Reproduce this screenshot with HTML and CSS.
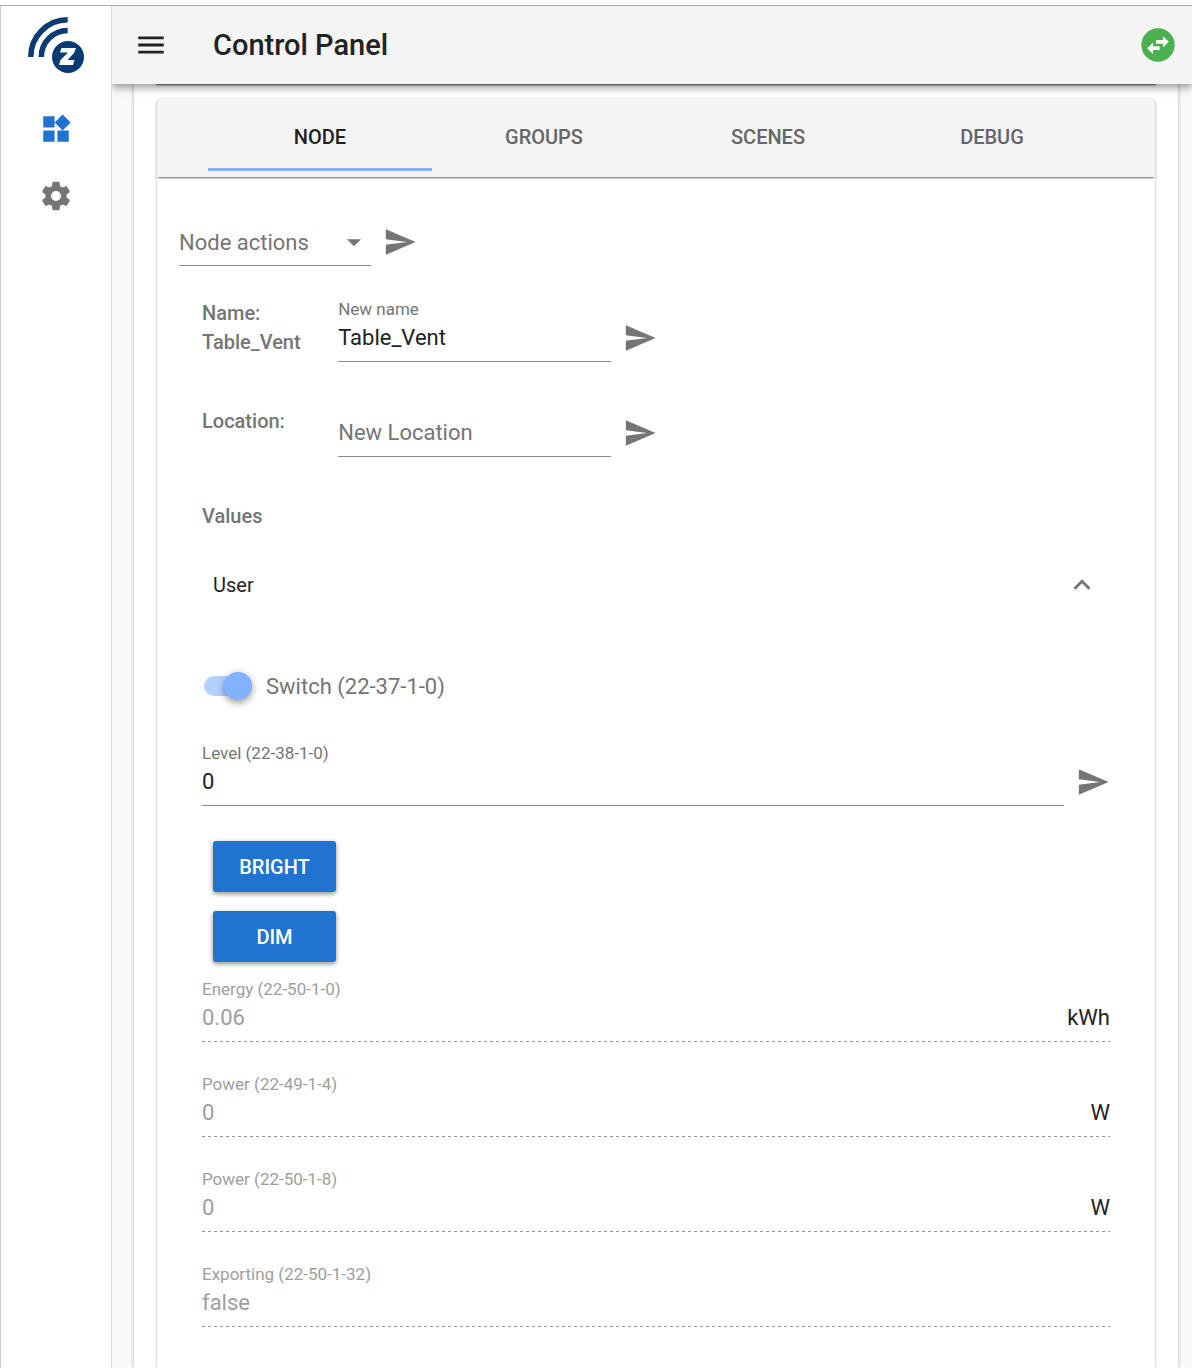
FILE: index.html
```html
<!DOCTYPE html>
<html lang="en">
<head>
  <meta charset="UTF-8">
  <meta name="viewport" content="width=device-width, initial-scale=1.0">
  <title>Control Panel</title>
  <link rel="stylesheet" href="styles.css">
</head>
<body>
  <!-- shared icons -->
  <svg class="sprite" aria-hidden="true">
    <symbol id="send" viewBox="0 0 24 24"><path d="M2.01 21L23 12 2.01 3 2 10l15 2-15 2z"/></symbol>
  </svg>

  <div class="app">
    <nav class="sidebar">
      <a href="#" class="logo" aria-label="Home">
        <svg viewBox="0 0 56 56" width="56" height="56">
          <path d="M2.800 40A37 37 0 0 1 39.700 2.800M13.300 40A26.500 26.500 0 0 1 39.700 13.500" fill="none" stroke="#0b3b73" stroke-width="5.500"/>
          <circle cx="40" cy="40" r="16" fill="#0b3b73"/>
          <path d="M33.500 31H48L46 36L39.500 43H46.500L45 48H31L32.500 43L40 35.500H32z" fill="#fff"/>
        </svg>
      </a>
      <a href="#" class="side-link active" aria-label="Control Panel">
        <svg viewBox="0 0 24 24"><path d="M13 13v8h8v-8h-8zM3 21h8v-8H3v8zM3 3v8h8V3H3zm13.660-1.310L11 7.340 16.660 13l5.660-5.660-5.660-5.650z"/></svg>
      </a>
      <a href="#" class="side-link" aria-label="Settings">
        <svg viewBox="0 0 24 24"><path d="M12 15.500A3.500 3.500 0 0 1 8.500 12 3.500 3.500 0 0 1 12 8.500a3.500 3.500 0 0 1 3.500 3.500 3.500 3.500 0 0 1-3.500 3.500m7.430-2.530c.04-.32.07-.64.07-.97s-.03-.66-.07-1l2.110-1.630c.19-.15.24-.42.12-.64l-2-3.460c-.12-.22-.39-.31-.61-.22l-2.490 1c-.52-.39-1.060-.73-1.690-.98l-.37-2.650A.506.506 0 0 0 14 2h-4c-.25 0-.46.18-.5.42l-.37 2.650c-.63.25-1.170.59-1.690.98l-2.490-1c-.22-.09-.49 0-.61.22l-2 3.460c-.13.22-.07.49.12.64L4.570 11c-.04.34-.07.67-.07 1s.03.65.07.97l-2.110 1.660c-.19.15-.25.42-.12.64l2 3.460c.12.22.39.3.61.22l2.490-1.010c.52.4 1.060.74 1.690.99l.37 2.650c.04.24.25.42.5.42h4c.25 0 .46-.18.5-.42l.37-2.650c.63-.26 1.170-.59 1.690-.99l2.490 1.010c.22.08.49 0 .61-.22l2-3.460c.12-.22.07-.49-.12-.64z"/></svg>
      </a>
    </nav>

    <div class="page">
      <header class="toolbar">
        <button type="button" class="icon-btn menu-btn" aria-label="Menu">
          <svg viewBox="0 0 24 24"><path d="M3 18h18v-2H3v2zm0-5h18v-2H3v2zm0-7v2h18V6H3z"/></svg>
        </button>
        <h1>Control Panel</h1>
        <svg class="status" viewBox="0 0 24 24" role="img" aria-label="Connected"><circle cx="12" cy="12" r="10" fill="#4caf50"/><path fill="#fff" d="M10.800 9H15V6.700L18.500 10.100 15 13.500V11.200H10.800zM13 15H9V17.400L5.500 14 9 10.600V12.800H13z"/></svg>
      </header>

      <main class="content">
        <div class="card">
          <div class="table-end"></div>
          <section class="panel">
            <div class="tabs" role="tablist">
              <button type="button" role="tab" class="tab active" aria-selected="true">NODE</button>
              <button type="button" role="tab" class="tab">GROUPS</button>
              <button type="button" role="tab" class="tab">SCENES</button>
              <button type="button" role="tab" class="tab">DEBUG</button>
            </div>

            <div class="actions">
              <div class="select">
                <select aria-label="Node actions">
                  <option>Node actions</option>
                </select>
                <svg viewBox="0 0 24 24"><path d="M7 10l5 5 5-5z"/></svg>
              </div>
              <button type="button" class="icon-btn" aria-label="Run action"><svg><use href="#send"/></svg></button>
            </div>

            <div class="node">
              <div class="row">
                <div class="row-title">Name:<br>Table_Vent</div>
                <div class="field short">
                  <label for="name">New name</label>
                  <input type="text" id="name" value="Table_Vent">
                </div>
                <button type="button" class="icon-btn" aria-label="Send name"><svg><use href="#send"/></svg></button>
              </div>
              <div class="row">
                <div class="row-title single">Location:</div>
                <div class="field short no-label">
                  <input type="text" id="location" placeholder="New Location" aria-label="New Location">
                </div>
                <button type="button" class="icon-btn" aria-label="Send location"><svg><use href="#send"/></svg></button>
              </div>

              <h2>Values</h2>
              <button type="button" class="group-header" aria-expanded="true">
                User
                <svg viewBox="0 0 24 24"><path d="M7.410 15.410L12 10.830l4.590 4.580L18 14l-6-6-6 6z"/></svg>
              </button>

              <label class="switch">
                <input type="checkbox" checked>
                Switch (22-37-1-0)
              </label>

              <div class="row">
                <div class="field">
                  <label for="level">Level (22-38-1-0)</label>
                  <input type="text" id="level" value="0">
                </div>
                <button type="button" class="icon-btn" aria-label="Send level"><svg><use href="#send"/></svg></button>
              </div>

              <div class="buttons">
                <button type="button" class="btn">BRIGHT</button>
                <button type="button" class="btn">DIM</button>
              </div>

              <div class="field disabled">
                <label for="energy">Energy (22-50-1-0)</label>
                <div class="value"><input type="text" id="energy" value="0.06" disabled><span>kWh</span></div>
              </div>
              <div class="field disabled">
                <label for="power1">Power (22-49-1-4)</label>
                <div class="value"><input type="text" id="power1" value="0" disabled><span>W</span></div>
              </div>
              <div class="field disabled">
                <label for="power2">Power (22-50-1-8)</label>
                <div class="value"><input type="text" id="power2" value="0" disabled><span>W</span></div>
              </div>
              <div class="field disabled">
                <label for="exporting">Exporting (22-50-1-32)</label>
                <div class="value"><input type="text" id="exporting" value="false" disabled></div>
              </div>
            </div>
          </section>
        </div>
      </main>
    </div>
  </div>
</body>
</html>
```

FILE: styles.css
```css
* {
  box-sizing: border-box;
}
body {
  margin: 0;
  padding-top: 5px;
  background: #fff;
  color: #222;
  font-family: Roboto, sans-serif;
  font-size: 22px;
}
button, input, select {
  font: inherit;
  color: inherit;
  margin: 0;
  padding: 0;
  border: 0;
  background: none;
}
button {
  cursor: pointer;
}
svg {
  fill: currentColor;
}
.sprite {
  display: none;
}
.app {
  display: flex;
  min-height: calc(100vh - 5px);
  border-top: 1px solid #aaa;
  border-left: 1px solid #ccc;
}

/* sidebar */
.sidebar {
  flex: none;
  display: flex;
  flex-direction: column;
  align-items: center;
  width: 111px;
  padding-top: 11px;
  border-right: 1px solid #ddd;
}
.logo {
  height: 56px;
  margin-bottom: 39px;
}
.side-link {
  height: 34px;
  margin-bottom: 33px;
  color: #757575;
}
.side-link.active {
  color: #2173d2;
}
.side-link svg {
  width: 34px;
  height: 34px;
}

/* toolbar */
.page {
  flex: 1;
  display: flex;
  flex-direction: column;
  min-width: 0;
}
.toolbar {
  position: relative;
  z-index: 1;
  display: flex;
  align-items: center;
  height: 78px;
  padding: 0 14px 1px 22px;
  background: #f4f4f4;
  box-shadow: 0 3px 6px -1px rgba(0,0,0,.2), 0 6px 7px rgba(0,0,0,.14), 0 1px 14px rgba(0,0,0,.12);
  clip-path: inset(0 0 -30px 0);
}
.toolbar h1 {
  flex: 1;
  margin: 0 0 0 45px;
  font-size: 29px;
  font-weight: 500;
}
.status {
  width: 40px;
  height: 40px;
}
.icon-btn {
  flex: none;
  display: flex;
  align-items: center;
  height: 36px;
  color: #757575;
}
.icon-btn svg {
  width: 34px;
  height: 34px;
}
.menu-btn {
  color: #222;
}

/* cards */
.content {
  flex: 1;
  display: flex;
  padding: 0 14px 0 22px;
  background: #fafafa;
}
.card {
  flex: 1;
  display: flex;
  flex-direction: column;
  min-width: 0;
  padding: 0 23px;
  background: #fff;
  box-shadow: 0 0 4px rgba(0,0,0,.3);
}
.table-end {
  height: 0;
  margin-bottom: 15px;
  box-shadow: 0 0 2px 1px rgba(0,0,0,.7);
}
.panel {
  flex: 1;
  background: #fff;
  box-shadow: 0 1px 3px rgba(0,0,0,.3);
}
.tabs {
  display: flex;
  justify-content: center;
  height: 78px;
  padding-bottom: 6px;
  background: #f4f4f4;
  box-shadow: 0 2px 2px -1px rgba(0,0,0,.6);
}
.tab {
  flex: 0 1 224px;
  padding-top: 7px;
  border-bottom: 3px solid transparent;
  color: #666;
  font-size: 20px;
  font-weight: 500;
}
.tab.active {
  border-color: #82b1ff;
  color: #222;
}

/* node tab */
.actions {
  display: flex;
  align-items: flex-end;
  gap: 12px;
  padding: 47px 22px 33px;
}
.select {
  display: grid;
  width: 192px;
  padding-bottom: 5px;
  border-bottom: 1px solid #8c8c8c;
  color: #757575;
}
.select select {
  grid-area: 1 / 1;
  appearance: none;
  height: 36px;
}
.select svg {
  grid-area: 1 / 1;
  place-self: center end;
  width: 34px;
  height: 34px;
  pointer-events: none;
}
.actions .icon-btn, .row .icon-btn {
  margin-bottom: 6px;
}
.node {
  padding: 0 45px;
}
.row {
  display: flex;
  align-items: flex-end;
  margin-bottom: 32px;
}
.row .icon-btn {
  margin-left: 12px;
}
.row-title {
  align-self: flex-start;
  flex: 0 0 15%;
  color: #757575;
  font-size: 20px;
  font-weight: 500;
  line-height: 29px;
}
.row-title.single {
  padding-top: 13px;
}
.field {
  flex: 1;
  display: flex;
  flex-direction: column;
  min-width: 0;
  padding-bottom: 6px;
  border-bottom: 1px solid #8c8c8c;
}
.field.short {
  flex: 0 0 30%;
}
.field.no-label {
  padding-top: 20px;
}
.field label {
  color: #757575;
  font-size: 17px;
  line-height: 20px;
}
.field input {
  width: 100%;
  height: 36px;
}
.field input::placeholder {
  color: #757575;
}
h2 {
  margin: 45px 0 20px;
  color: #757575;
  font-size: 20px;
  font-weight: 500;
  line-height: 29px;
}
.group-header {
  display: flex;
  align-items: center;
  justify-content: space-between;
  width: 100%;
  height: 67px;
  padding: 0 11px;
  font-size: 20px;
}
.group-header svg {
  width: 34px;
  height: 34px;
  color: #757575;
}
.switch {
  display: flex;
  align-items: center;
  gap: 14px;
  height: 34px;
  margin: 51px 0 40px 2px;
  color: #757575;
}
.switch input {
  appearance: none;
  display: flex;
  align-items: center;
  justify-content: flex-end;
  width: 48px;
  height: 20px;
  border-radius: 10px;
  background: #b4d0ff;
}
.switch input::before {
  content: "";
  flex: none;
  width: 28px;
  height: 28px;
  border-radius: 50%;
  background: #82b1ff;
  box-shadow: 0 3px 6px rgba(0,0,0,.3), 0 1px 12px rgba(0,0,0,.12);
}
.buttons {
  display: flex;
  flex-direction: column;
  align-items: flex-start;
  gap: 19px;
  margin: 35px 11px 17px;
}
.btn {
  min-width: 123px;
  height: 51px;
  border-radius: 3px;
  background: #2173d2;
  color: #fff;
  font-size: 20px;
  font-weight: 500;
  box-shadow: 0 2px 4px rgba(0,0,0,.35), 0 1px 6px rgba(0,0,0,.12);
}
.disabled {
  margin-bottom: 32px;
  border-bottom-color: transparent;
  background: repeating-linear-gradient(90deg, #999 0 3px, transparent 3px 6px) bottom / 100% 1px no-repeat border-box;
}
.disabled label, .disabled input {
  color: #9e9e9e;
}
.value {
  display: flex;
  align-items: center;
}
```
